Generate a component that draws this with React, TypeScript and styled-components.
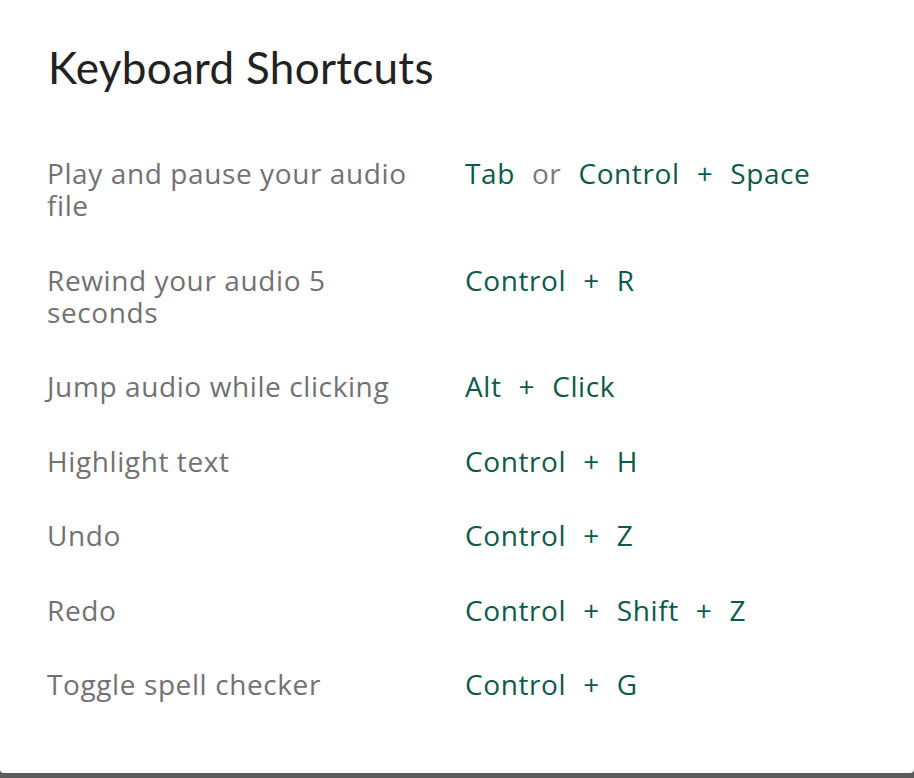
import React from 'react';
import styled, { createGlobalStyle } from 'styled-components';

const GlobalStyle = createGlobalStyle`
    html, body {
        margin: 0;
        padding: 0;
        background-color: #5b5b5b;
    }
    body {
        font-family: 'Open Sans', 'Noto Sans', sans-serif;
    }
`;

const Panel = styled.div`
    height: 773px;
    box-sizing: border-box;
    background-color: #fff;
    border-radius: 0 0 4px 4px;
    padding: 43px 48px 0 47px;
`;

const Title = styled.h1`
    margin: 0 0 66px 1px;
    font-family: Lato, 'Open Sans', sans-serif;
    font-size: 44px;
    line-height: 48px;
    font-weight: 400;
    letter-spacing: 0.3px;
    color: #222;
`;

const ShortcutList = styled.div`
    display: grid;
    grid-template-columns: 418px auto;
    row-gap: 42.5px;
    font-size: 28px;
    line-height: 32px;
    letter-spacing: 0.6px;
`;

const Description = styled.div`
    color: #727272;
    padding-right: 40px;
`;

const Keys = styled.div`
    display: flex;
    flex-wrap: wrap;
    align-items: baseline;
    gap: 17px;
`;

const Key = styled.span<{ $muted?: boolean }>`
    color: ${(p) => (p.$muted ? '#7a7a7a' : '#0d5a4c')};
`;

type Shortcut = {
    label: string;
    keys: string[];
};

const SHORTCUTS: Shortcut[] = [
    { label: 'Play and pause your audio file', keys: ['Tab', 'or', 'Control', '+', 'Space'] },
    { label: 'Rewind your audio 5 seconds', keys: ['Control', '+', 'R'] },
    { label: 'Jump audio while clicking', keys: ['Alt', '+', 'Click'] },
    { label: 'Highlight text', keys: ['Control', '+', 'H'] },
    { label: 'Undo', keys: ['Control', '+', 'Z'] },
    { label: 'Redo', keys: ['Control', '+', 'Shift', '+', 'Z'] },
    { label: 'Toggle spell checker', keys: ['Control', '+', 'G'] },
];

export default function App() {
    return (
        <>
            <GlobalStyle />
            <Panel>
                <Title>Keyboard Shortcuts</Title>
                <ShortcutList>
                    {SHORTCUTS.map((s) => (
                        <React.Fragment key={s.label}>
                            <Description>{s.label}</Description>
                            <Keys>
                                {s.keys.map((k, i) => (
                                    <Key key={i} $muted={k === 'or'}>
                                        {k}
                                    </Key>
                                ))}
                            </Keys>
                        </React.Fragment>
                    ))}
                </ShortcutList>
            </Panel>
        </>
    );
}
